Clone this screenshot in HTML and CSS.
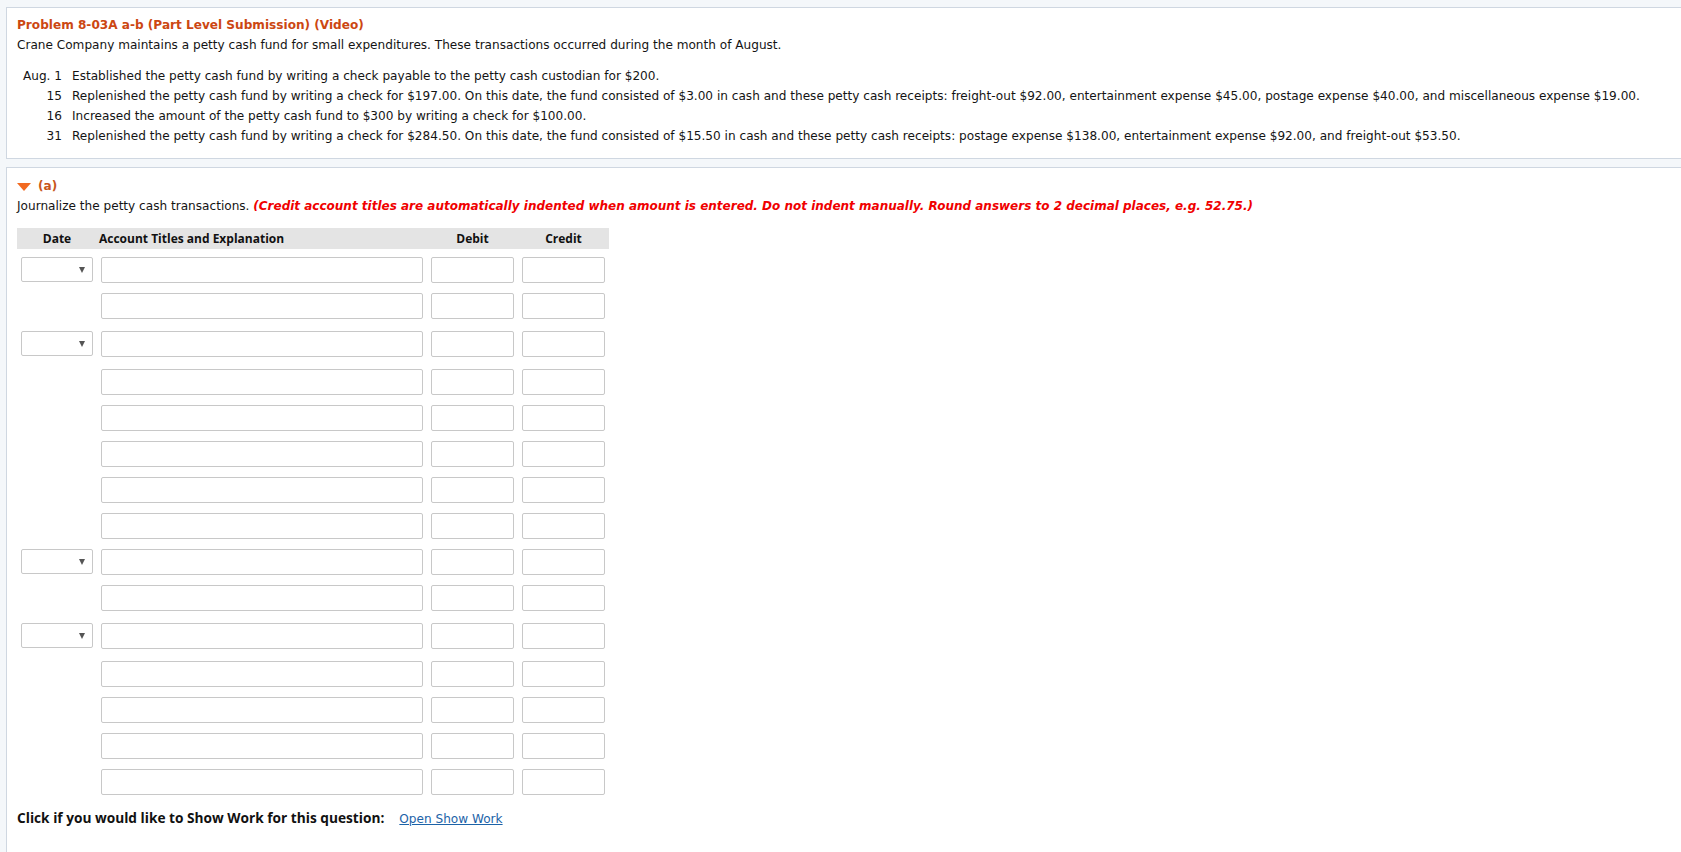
FILE: index.html
```html
<!DOCTYPE html>
<html lang="en">
<head>
<meta charset="utf-8">
<title>Problem 8-03A a-b</title>
<link rel="stylesheet" href="styles.css">
</head>
<body>
<div class="panel panel-problem">
  <div class="title">Problem 8-03A a-b (Part Level Submission) (Video)</div>
  <p class="intro">Crane Company maintains a petty cash fund for small expenditures. These transactions occurred during the month of August.</p>
  <div class="txns">
    <div class="txn"><span class="txn-date">Aug. 1</span><span class="txn-text">Established the petty cash fund by writing a check payable to the petty cash custodian for $200.</span></div>
    <div class="txn"><span class="txn-date">15</span><span class="txn-text">Replenished the petty cash fund by writing a check for $197.00. On this date, the fund consisted of $3.00 in cash and these petty cash receipts: freight-out $92.00, entertainment expense $45.00, postage expense $40.00, and miscellaneous expense $19.00.</span></div>
    <div class="txn"><span class="txn-date">16</span><span class="txn-text">Increased the amount of the petty cash fund to $300 by writing a check for $100.00.</span></div>
    <div class="txn"><span class="txn-date">31</span><span class="txn-text">Replenished the petty cash fund by writing a check for $284.50. On this date, the fund consisted of $15.50 in cash and these petty cash receipts: postage expense $138.00, entertainment expense $92.00, and freight-out $53.50.</span></div>
  </div>
</div>

<div class="panel panel-part">
  <div class="part-head">
    <svg class="part-caret" width="14" height="8" viewBox="0 0 14 8"><polygon points="0,0 14,0 7,8" fill="#f26a21"/></svg>
    <span class="part-label">(a)</span>
  </div>
  <p class="instructions">Journalize the petty cash transactions. <em class="hint">(Credit account titles are automatically indented when amount is entered. Do not indent manually. Round answers to 2 decimal places, e.g. 52.75.)</em></p>

  <div class="journal">
    <div class="jhead">
      <div class="jh jh-date">Date</div>
      <div class="jh jh-acct">Account Titles and Explanation</div>
      <div class="jh jh-num">Debit</div>
      <div class="jh jh-num">Credit</div>
    </div>

    <div class="jrow"><div class="jc"><div class="sel"><span class="sel-arrow"></span></div></div><div class="jc"><div class="inp acct"></div></div><div class="jc"><div class="inp num"></div></div><div class="jc"><div class="inp num"></div></div></div>
    <div class="jrow"><div class="jc"></div><div class="jc"><div class="inp acct"></div></div><div class="jc"><div class="inp num"></div></div><div class="jc"><div class="inp num"></div></div></div>
    <div class="jrow spaced"><div class="jc"><div class="sel"><span class="sel-arrow"></span></div></div><div class="jc"><div class="inp acct"></div></div><div class="jc"><div class="inp num"></div></div><div class="jc"><div class="inp num"></div></div></div>
    <div class="jrow"><div class="jc"></div><div class="jc"><div class="inp acct"></div></div><div class="jc"><div class="inp num"></div></div><div class="jc"><div class="inp num"></div></div></div>
    <div class="jrow"><div class="jc"></div><div class="jc"><div class="inp acct"></div></div><div class="jc"><div class="inp num"></div></div><div class="jc"><div class="inp num"></div></div></div>
    <div class="jrow"><div class="jc"></div><div class="jc"><div class="inp acct"></div></div><div class="jc"><div class="inp num"></div></div><div class="jc"><div class="inp num"></div></div></div>
    <div class="jrow"><div class="jc"></div><div class="jc"><div class="inp acct"></div></div><div class="jc"><div class="inp num"></div></div><div class="jc"><div class="inp num"></div></div></div>
    <div class="jrow"><div class="jc"></div><div class="jc"><div class="inp acct"></div></div><div class="jc"><div class="inp num"></div></div><div class="jc"><div class="inp num"></div></div></div>
    <div class="jrow"><div class="jc"><div class="sel"><span class="sel-arrow"></span></div></div><div class="jc"><div class="inp acct"></div></div><div class="jc"><div class="inp num"></div></div><div class="jc"><div class="inp num"></div></div></div>
    <div class="jrow"><div class="jc"></div><div class="jc"><div class="inp acct"></div></div><div class="jc"><div class="inp num"></div></div><div class="jc"><div class="inp num"></div></div></div>
    <div class="jrow spaced"><div class="jc"><div class="sel"><span class="sel-arrow"></span></div></div><div class="jc"><div class="inp acct"></div></div><div class="jc"><div class="inp num"></div></div><div class="jc"><div class="inp num"></div></div></div>
    <div class="jrow"><div class="jc"></div><div class="jc"><div class="inp acct"></div></div><div class="jc"><div class="inp num"></div></div><div class="jc"><div class="inp num"></div></div></div>
    <div class="jrow"><div class="jc"></div><div class="jc"><div class="inp acct"></div></div><div class="jc"><div class="inp num"></div></div><div class="jc"><div class="inp num"></div></div></div>
    <div class="jrow"><div class="jc"></div><div class="jc"><div class="inp acct"></div></div><div class="jc"><div class="inp num"></div></div><div class="jc"><div class="inp num"></div></div></div>
    <div class="jrow"><div class="jc"></div><div class="jc"><div class="inp acct"></div></div><div class="jc"><div class="inp num"></div></div><div class="jc"><div class="inp num"></div></div></div>
  </div>

  <div class="showwork">
    <span class="showwork-label">Click if you would like to Show Work for this question:</span>
    <a class="showwork-link" href="#">Open Show Work</a>
  </div>
</div>
</body>
</html>
```

FILE: styles.css
```css
html, body {
  background: #f4f7fa;
}
body {
  margin: 7px 0 0 6px;
  font-family: "DejaVu Sans", Verdana, sans-serif;
  font-size: 12.1px;
  line-height: 20px;
  color: #141414;
}
.panel {
  background: #fff;
  border: 1px solid #cfd7e1;
  border-right: 0;
}
.panel-problem {
  padding: 7px 10px 12px 10px;
}
.title {
  font-weight: bold;
  color: #cc4712;
}
.intro {
  margin: 0 0 11px 0;
}
.txns {
  display: flex;
  flex-direction: column;
}
.txn {
  display: flex;
}
.txn-date {
  width: 45px;
  text-align: right;
  flex: none;
}
.txn-text {
  padding-left: 10px;
}

.panel-part {
  margin-top: 8px;
  padding: 8px 10px 60px 10px;
}
.part-head {
  display: flex;
  align-items: center;
  gap: 7px;
}
.part-caret {
  display: block;
  margin-top: 1px;
}
.part-label {
  color: #c8561b;
  font-weight: bold;
}
.instructions {
  margin: 0 0 12px 0;
}
.hint {
  color: #f00000;
  font-weight: bold;
  font-style: italic;
  font-size: 12px;
}

.journal {
  width: 592px;
}
.jhead {
  display: grid;
  grid-template-columns: 80px 330px 91px 91px;
  background: #e4e4e4;
  height: 21px;
  align-items: center;
  margin-bottom: 8px;
  font-family: "Open Sans", sans-serif;
  font-weight: 700;
  font-size: 12px;
  color: #111;
}
.jh-date, .jh-num {
  text-align: center;
}
.jh-acct {
  padding-left: 2px;
}
.jrow {
  display: grid;
  grid-template-columns: 80px 330px 91px 91px;
  height: 36px;
}
.jrow.spaced {
  padding-top: 2px;
  height: 40px;
  box-sizing: border-box;
}
.jc {
  padding: 0 4px;
}
.inp {
  height: 26px;
  box-sizing: border-box;
  border: 1px solid #c8c8c8;
  border-radius: 2px;
  background: #fff;
}
.sel {
  height: 25px;
  box-sizing: border-box;
  border: 1px solid #c8c8c8;
  border-radius: 2px;
  background: #fff;
  display: flex;
  align-items: center;
  justify-content: flex-end;
  padding-right: 7px;
}
.sel-arrow {
  width: 0;
  height: 0;
  border-left: 3px solid transparent;
  border-right: 3px solid transparent;
  border-top: 6px solid #555;
}

.showwork {
  margin-top: 3px;
  display: flex;
  align-items: baseline;
  gap: 15px;
}
.showwork-label {
  font-family: "Open Sans", sans-serif;
  font-weight: 700;
  font-size: 13.7px;
  color: #111;
}
.showwork-link {
  color: #1c63a8;
  text-decoration: underline;
}
```
